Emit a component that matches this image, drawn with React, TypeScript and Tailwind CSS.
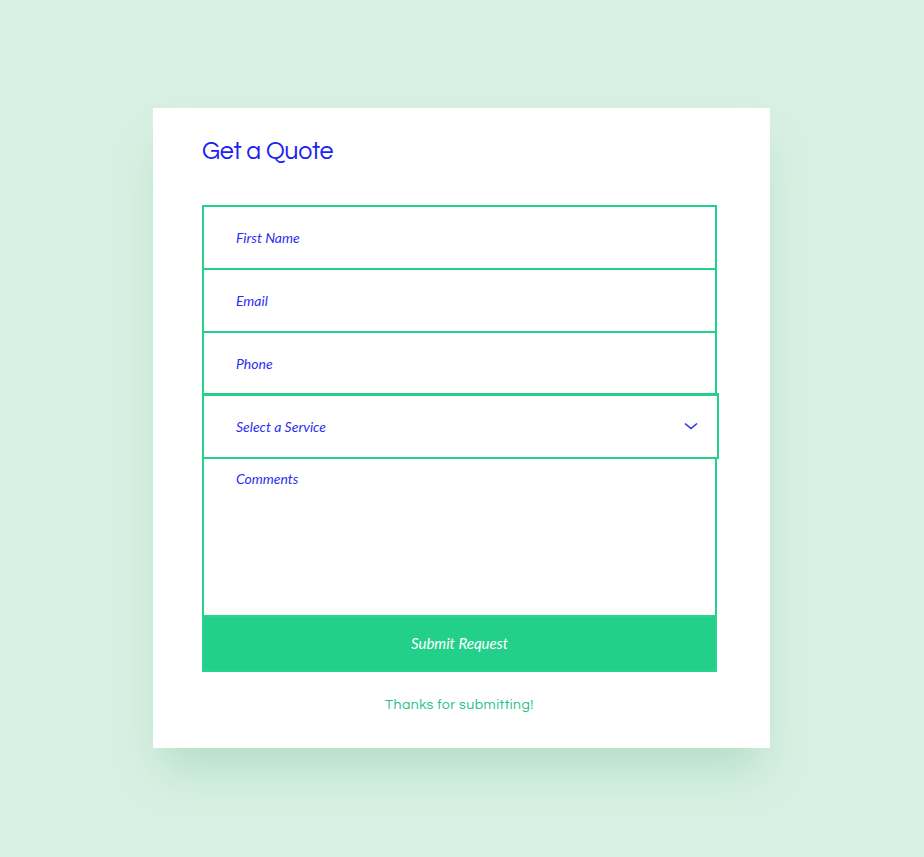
const fields = ["First Name", "Email", "Phone"];

export default function App() {
  return (
    <div className="min-h-screen w-full bg-[#d7f0e3] pt-[108px] font-['Open_Sans',sans-serif]">
      <div className="ml-[153px] w-[617px] h-[640px] bg-white pl-[49px] pr-[53px] pt-[26px] shadow-[0_30px_40px_-10px_rgba(120,190,150,0.35)]">
        {/* heading */}
        <h1 className="text-[25px] font-light leading-[34px] tracking-[-0.3px] text-[#1b22f2] font-['Questrial','Lato',sans-serif]">
          Get a Quote
        </h1>

        <form className="mt-[37px] flex flex-col" onSubmit={(e) => e.preventDefault()}>
          {fields.map((f, i) => (
            <div
              key={f}
              className={`flex h-[65px] items-center border-2 border-[#22d18a] pl-[32px] ${i > 0 ? "-mt-[2px]" : ""}`}
            >
              <span className="text-[14px] italic text-[#2a2ff0] font-['Lato',sans-serif]">{f}</span>
            </div>
          ))}

          {/* service picker */}
          <div className="-mt-[3px] flex h-[66px] w-[calc(100%+2px)] items-center justify-between border-2 border-[#22d18a] pl-[32px] pr-[19px]">
            <span className="text-[14px] italic text-[#2a2ff0] font-['Lato',sans-serif]">Select a Service</span>
            <svg width="14" height="8" viewBox="0 0 14 8" fill="none">
              <path d="M1 1.5L7 6.5L13 1.5" stroke="#2a2ff0" strokeWidth="1.6" />
            </svg>
          </div>

          <div className="-mt-[2px] h-[158px] border-2 border-b-0 border-[#22d18a] pl-[32px] pt-[7px]">
            <span className="text-[14px] italic text-[#2a2ff0] font-['Lato',sans-serif]">Comments</span>
          </div>

          <button
            type="submit"
            className="flex h-[57px] items-center justify-center border-2 border-[#2ad48e] bg-[#23d08a] text-[15px] italic text-white font-['Lato',sans-serif]"
          >
            Submit Request
          </button>
        </form>

        <p className="mt-[23px] text-center text-[14px] tracking-[0.5px] text-[#1cc288] font-['Questrial','Lato',sans-serif]">
          Thanks for submitting!
        </p>
      </div>
    </div>
  );
}
